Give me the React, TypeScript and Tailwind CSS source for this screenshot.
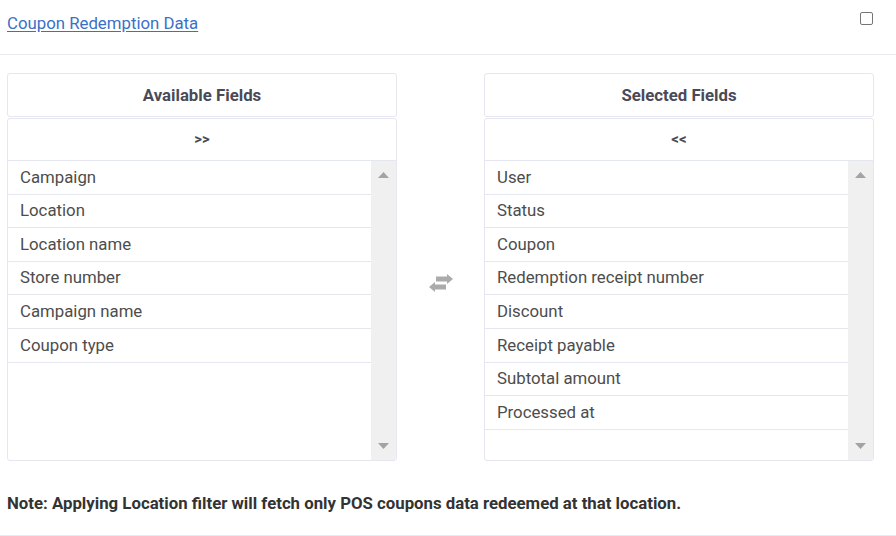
import React from "react";

const available = ["Campaign", "Location", "Location name", "Store number", "Campaign name", "Coupon type"];
const selected = [
  "User",
  "Status",
  "Coupon",
  "Redemption receipt number",
  "Discount",
  "Receipt payable",
  "Subtotal amount",
  "Processed at",
];

function FieldPanel({ title, action, items }: { title: string; action: string; items: string[] }) {
  return (
    <div className="w-[390px] flex flex-col gap-[1px]">
      <div className="h-[44px] pt-[2px] border border-[#e4e7ef] rounded-[3px] flex items-center justify-center text-[16.8px] font-bold text-[#4a4a57]">
        {title}
      </div>
      <div className="h-[343px] border border-[#e4e7ef] rounded-[3px] flex flex-col overflow-hidden">
        <div className="h-[42px] shrink-0 border-b border-[#e4e7ef] flex items-center justify-center text-[15px] font-bold text-[#4a4a57]">
          {action}
        </div>
        <div className="flex flex-1 min-h-0">
          <div className="flex-1 flex flex-col">
            {items.map((it) => (
              <div
                key={it}
                className="h-[33.6px] shrink-0 border-b border-[#e4e7ef] flex items-center px-[12px] text-[16.8px] text-[#4d4d4d]"
              >
                {it}
              </div>
            ))}
          </div>
          <div className="w-[25px] bg-[#f0f0f0] flex flex-col items-center justify-between py-[11px]">
            <svg width="11" height="6" viewBox="0 0 11 6">
              <path d="M0 6 L5.5 0 L11 6 Z" fill="#a3a3a3" />
            </svg>
            <svg width="11" height="6" viewBox="0 0 11 6">
              <path d="M0 0 L5.5 6 L11 0 Z" fill="#a3a3a3" />
            </svg>
          </div>
        </div>
      </div>
    </div>
  );
}

export default function App() {
  return (
    <div className="w-[896px] h-[536px] bg-white font-['Roboto',sans-serif] overflow-hidden">
      <div className="h-[55px] border-b border-[#e6e9ef] px-[7px] flex items-start justify-between">
        <a href="#" className="mt-[11px] text-[16.8px] text-[#3a70c7] underline underline-offset-2">
          Coupon Redemption Data
        </a>
        <div className="mt-[12px] mr-[16px] w-[13px] h-[13px] border border-[#767676] rounded-[2px] bg-white" />
      </div>
      <div className="pt-[18px] px-[7px] flex">
        <FieldPanel title="Available Fields" action=">>" items={available} />
        <div className="w-[87px] flex items-center justify-center pt-[32px]">
          <svg width="26" height="18" viewBox="0 0 26 18">
            <path d="M8 2.5 H19 V0 L25 5 L19 10 V7.5 H8 Z" fill="#ababab" />
            <path d="M18 10.5 H7 V8 L1 13 L7 18 V15.5 H18 Z" fill="#ababab" />
          </svg>
        </div>
        <FieldPanel title="Selected Fields" action="<<" items={selected} />
      </div>
      <div className="mt-[30px] h-[45px] px-[7px] border-b border-[#e6e9ef] text-[16.8px] font-bold text-[#333333]">
        Note: Applying Location filter will fetch only POS coupons data redeemed at that location.
      </div>
    </div>
  );
}
